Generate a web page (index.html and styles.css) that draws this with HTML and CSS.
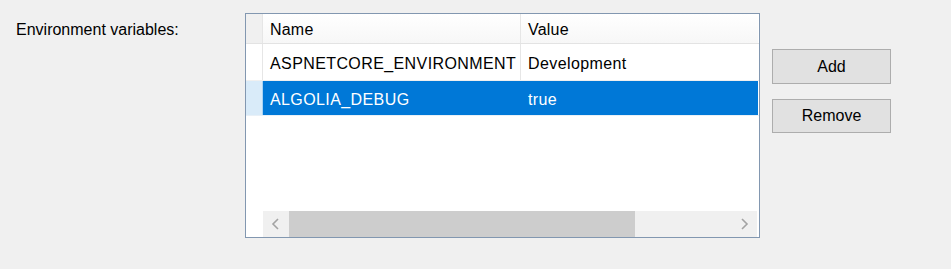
FILE: index.html
```html
<!DOCTYPE html>
<html lang="en">
  <head>
    <meta charset="UTF-8" />
    <title>Environment variables</title>
    <link rel="stylesheet" href="styles.css">
  </head>
  <body>
    <div class="page">
      <div class="label-col">Environment variables:</div>

      <!-- Variables grid -->
      <div class="grid-box">
        <div class="grid-row header-row">
          <div class="row-head"></div>
          <div class="cell name-col">Name</div>
          <div class="cell value-col">Value</div>
        </div>
        <div class="grid-row data-row">
          <div class="row-head"></div>
          <div class="cell name-col">ASPNETCORE_ENVIRONMENT</div>
          <div class="cell value-col">Development</div>
        </div>
        <div class="grid-row data-row selected">
          <div class="row-head"></div>
          <div class="cell name-col">ALGOLIA_DEBUG</div>
          <div class="cell value-col">true</div>
        </div>
        <div class="grid-empty"></div>

        <!-- Horizontal scroll bar -->
        <div class="scroll-row">
          <div class="scroll-gap"></div>
          <div class="scrollbar">
            <div class="scroll-btn">
              <svg width="10" height="12" viewBox="0 0 10 12"><path d="M7 1 L2 6 L7 11" fill="none" stroke="#a3a3a3" stroke-width="1.6"/></svg>
            </div>
            <div class="scroll-thumb"></div>
            <div class="scroll-track"></div>
            <div class="scroll-btn">
              <svg width="10" height="12" viewBox="0 0 10 12"><path d="M3 1 L8 6 L3 11" fill="none" stroke="#a3a3a3" stroke-width="1.6"/></svg>
            </div>
          </div>
        </div>
      </div>

      <div class="button-col">
        <button class="win-button add-button">Add</button>
        <button class="win-button">Remove</button>
      </div>
    </div>
  </body>
</html>
```

FILE: styles.css
```css
html {
  height: 100%;
}
body {
  margin: 0;
  padding: 0;
  background: #f0f0f0;
  font-family: "Liberation Sans", Arial, sans-serif;
  font-size: 16px;
  color: #000;
}

.page {
  display: flex;
  padding-top: 13px;
}

/* Left label */
.label-col {
  width: 229px;
  padding-left: 16px;
  padding-top: 8px;
}

/* Grid */
.grid-box {
  width: 513px;
  height: 223px;
  border: 1px solid #8297b0;
  background: #fff;
  display: flex;
  flex-direction: column;
}

.grid-row {
  display: flex;
}

.row-head {
  width: 16px;
  border-right: 1px solid #e6e6e6;
  flex-shrink: 0;
}

.cell {
  padding-left: 7px;
  display: flex;
  align-items: center;
  box-sizing: border-box;
  white-space: nowrap;
  letter-spacing: 0.4px;
}

.name-col {
  width: 258px;
  border-right: 1px solid #e6e6e6;
}

.value-col {
  width: 237px;
}

.header-row {
  height: 29px;
  border-bottom: 1px solid #e3e3e3;
}

.header-row .row-head {
  background: #f0f0f0;
}

.header-row .cell {
  background: linear-gradient(#ffffff, #f7f7f7);
  padding-top: 3px;
  letter-spacing: 0.2px;
}

.data-row {
  height: 36px;
  border-bottom: 1px solid #f0f0f0;
}

.data-row .cell {
  padding-top: 4px;
}

.data-row.selected {
  height: 34px;
  border-bottom: 1px solid #e8f0f7;
}

.selected .row-head {
  background: #d9ebf9;
  border-right: 1px solid #a9d3f3;
}

.selected .cell {
  background: #0078d7;
  color: #fff;
  border-right-color: #0078d7;
}

.grid-empty {
  flex: 1;
}

/* Scroll bar */
.scroll-row {
  display: flex;
  height: 26px;
}

.scroll-gap {
  width: 17px;
}

.scrollbar {
  display: flex;
  width: 494px;
  background: #f0f0f0;
}

.scroll-btn {
  width: 26px;
  display: flex;
  align-items: center;
  justify-content: center;
}

.scroll-thumb {
  width: 346px;
  background: #cdcdcd;
}

.scroll-track {
  flex: 1;
}

/* Buttons */
.button-col {
  display: flex;
  flex-direction: column;
  gap: 15px;
  margin-left: 12px;
  padding-top: 36px;
}

.win-button {
  width: 119px;
  height: 34px;
  background: #e1e1e1;
  border: 1px solid #adadad;
  font-family: "Liberation Sans", Arial, sans-serif;
  font-size: 16px;
  color: #000;
  padding: 0;
}

.add-button {
  height: 35px;
}
```
